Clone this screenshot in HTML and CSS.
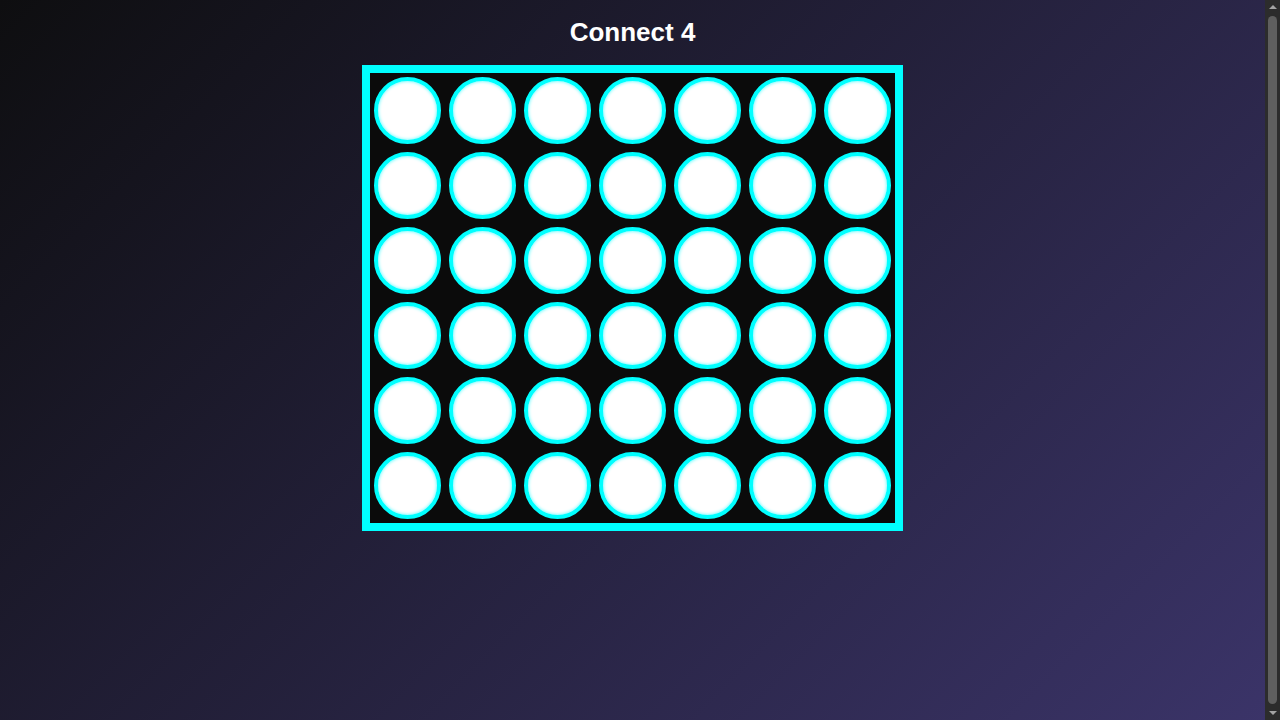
FILE: index.html
```html
<!DOCTYPE html>
<html lang="en">
<head>
<meta charset="utf-8">
<title>Connect 4</title>
<link rel="stylesheet" href="styles.css">
</head>
<body>
<div class="app">
  <h1 class="title">Connect 4</h1>
  <div class="board">
    <div class="cell"></div><div class="cell"></div><div class="cell"></div><div class="cell"></div><div class="cell"></div><div class="cell"></div><div class="cell"></div>
    <div class="cell"></div><div class="cell"></div><div class="cell"></div><div class="cell"></div><div class="cell"></div><div class="cell"></div><div class="cell"></div>
    <div class="cell"></div><div class="cell"></div><div class="cell"></div><div class="cell"></div><div class="cell"></div><div class="cell"></div><div class="cell"></div>
    <div class="cell"></div><div class="cell"></div><div class="cell"></div><div class="cell"></div><div class="cell"></div><div class="cell"></div><div class="cell"></div>
    <div class="cell"></div><div class="cell"></div><div class="cell"></div><div class="cell"></div><div class="cell"></div><div class="cell"></div><div class="cell"></div>
    <div class="cell"></div><div class="cell"></div><div class="cell"></div><div class="cell"></div><div class="cell"></div><div class="cell"></div><div class="cell"></div>
  </div>
</div>
<div class="scrollbar">
  <div class="arrow arrow-up"></div>
  <div class="thumb"></div>
  <div class="arrow arrow-down"></div>
</div>
</body>
</html>
```
FILE: styles.css
```css
body {
  margin: 0;
  min-height: 100vh;
  background: linear-gradient(135deg, #0e0e10 0%, #3b3469 100%);
  font-family: "Liberation Sans", Arial, sans-serif;
  color: #ffffff;
}
.app {
  display: flex;
  flex-direction: column;
  align-items: center;
  padding-right: 15px;
}
.title {
  font-size: 26px;
  font-weight: bold;
  margin: 17px 0 18px;
  line-height: 30px;
  color: #ffffff;
}
.board {
  display: grid;
  grid-template-columns: repeat(7, 75px);
  grid-template-rows: repeat(6, 75px);
  border: 8px solid #00ffff;
  background: #0b0b0b;
}
.cell {
  margin: 4px;
  width: 59px;
  height: 59px;
  border: 4px solid #00ffff;
  border-radius: 50%;
  background: #ffffff;
  box-shadow: inset 0 0 3px 1px #8ffcff;
}
.scrollbar {
  position: fixed;
  top: 0;
  right: 0;
  width: 15px;
  height: 100vh;
  background: #2c2c2c;
  display: flex;
  flex-direction: column;
  align-items: center;
}
.arrow {
  width: 0;
  height: 0;
  border-left: 4px solid transparent;
  border-right: 4px solid transparent;
  margin: 5px 0;
}
.arrow-up {
  border-bottom: 4px solid #a3a3a3;
}
.arrow-down {
  border-top: 4px solid #a3a3a3;
}
.thumb {
  flex: 1;
  width: 9px;
  margin: 2px 0;
  border-radius: 5px;
  background: #5f5f5f;
}
```
